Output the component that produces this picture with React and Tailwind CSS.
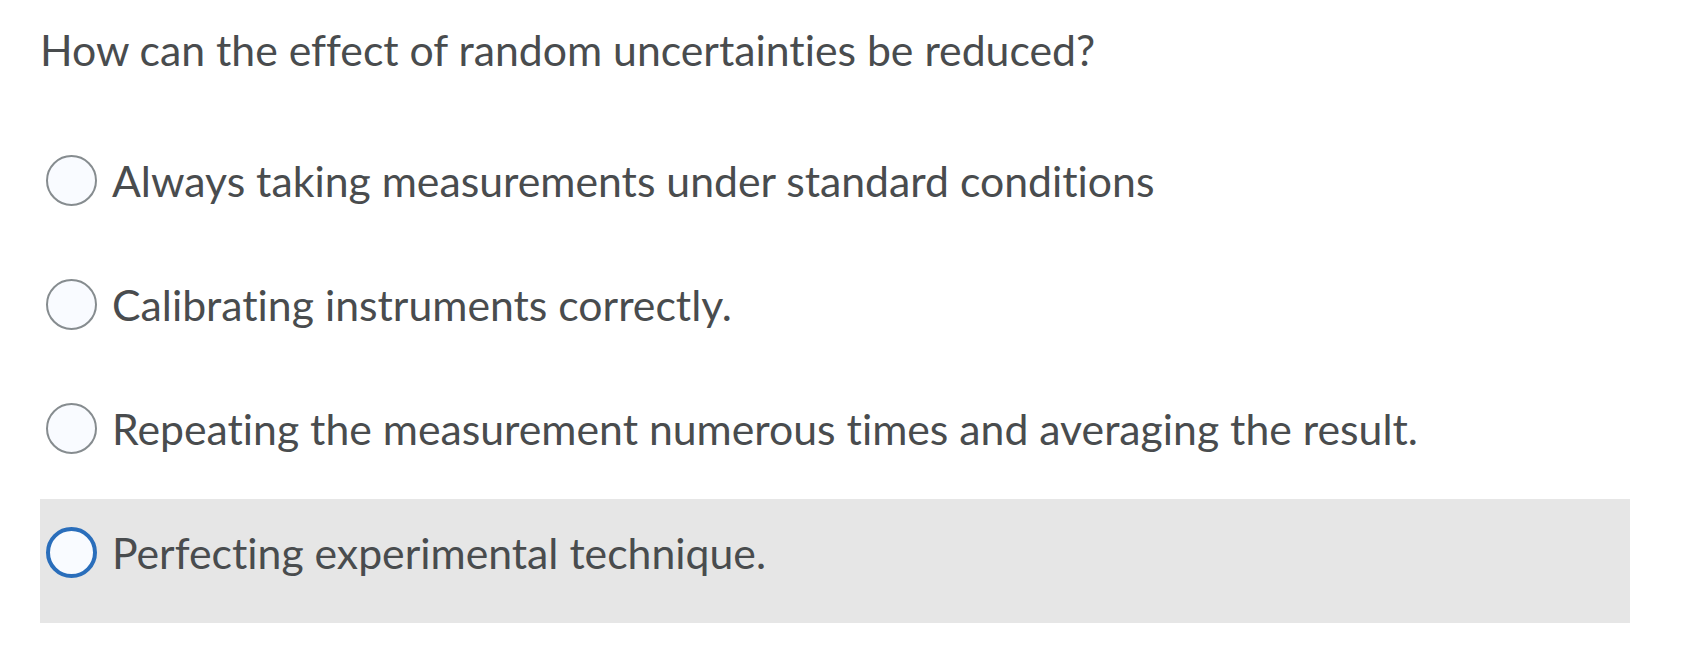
export default function App() {
  const options = [
    'Always taking measurements under standard conditions',
    'Calibrating instruments correctly.',
    'Repeating the measurement numerous times and averaging the result.',
    'Perfecting experimental technique.',
  ];
  const focused = 3;

  return (
    <div
      className="min-h-screen bg-white pl-10 pr-[58px] pt-6 text-[#494c4e] [font-variant-ligatures:none]"
      style={{ fontFamily: 'Lato, "Noto Sans", sans-serif' }}
    >
      <p className="text-[42.75px] leading-[1.2]">How can the effect of random uncertainties be reduced?</p>
      <div className="mt-[52px] flex flex-col">
        {options.map((text, i) => (
          <label
            key={text}
            className={`flex h-[124px] items-start gap-[15px] pl-[6px] pt-[28px] ${i === focused ? 'bg-[#e6e6e6]' : ''}`}
          >
            <span
              className={`block h-[51px] w-[51px] shrink-0 rounded-full bg-[#f9fbff] ${
                i === focused ? 'border-[4px] border-[#2a6ebb]' : 'border-2 border-[#868c8f]'
              }`}
            />
            <span className="text-[42.75px] leading-[1.2]">{text}</span>
          </label>
        ))}
      </div>
    </div>
  );
}
